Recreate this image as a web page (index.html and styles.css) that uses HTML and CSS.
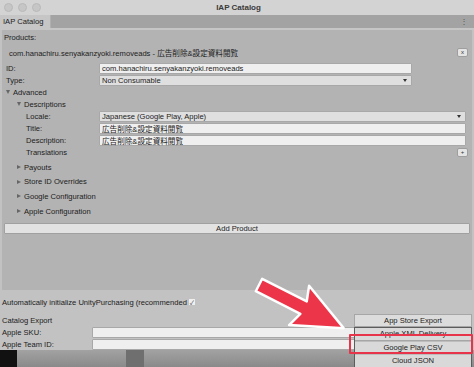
FILE: index.html
```html
<!DOCTYPE html>
<html lang="en">
<head>
    <meta charset="UTF-8">
    <meta name="viewport" content="width=device-width, initial-scale=1.0">
    <title>IAP Catalog</title>
    <link rel="stylesheet" href="styles.css">
</head>
<body>

<div class="window">
    <div class="titlebar">
        <div class="lights">
            <span class="light"></span>
            <span class="light"></span>
            <span class="light"></span>
        </div>
        <div class="title">IAP Catalog</div>
    </div>

    <div class="tabbar">
        <div class="tab">IAP Catalog</div>
        <div class="tab-menu">&#8942;</div>
    </div>

    <div class="scroll">
        <div class="row label-row">Products:</div>

        <div class="product-head">
            <span>com.hanachiru.senyakanzyoki.removeads - 広告削除&amp;設定資料閲覧</span>
            <button class="mini-btn">x</button>
        </div>

        <div class="row field-row">
            <span class="label">ID:</span>
            <div class="field short">com.hanachiru.senyakanzyoki.removeads</div>
        </div>
        <div class="row field-row">
            <span class="label">Type:</span>
            <div class="field dropdown short">Non Consumable<span class="caret"></span></div>
        </div>
        <div class="row foldout">
            <span class="tri open"></span>Advanced
        </div>
        <div class="row foldout indent1">
            <span class="tri open"></span>Descriptions
        </div>
        <div class="row field-row">
            <span class="label indent2">Locale:</span>
            <div class="field dropdown">Japanese (Google Play, Apple)<span class="caret"></span></div>
        </div>
        <div class="row field-row">
            <span class="label indent2">Title:</span>
            <div class="field">広告削除&amp;設定資料閲覧</div>
        </div>
        <div class="row field-row">
            <span class="label indent2">Description:</span>
            <div class="field">広告削除&amp;設定資料閲覧</div>
        </div>
        <div class="row translations">
            <span class="label indent2">Translations</span>
            <button class="mini-btn">+</button>
        </div>

        <div class="row foldout indent1 first-closed"><span class="tri"></span>Payouts</div>
        <div class="row foldout indent1 closed"><span class="tri"></span>Store ID Overrides</div>
        <div class="row foldout indent1 closed"><span class="tri"></span>Google Configuration</div>
        <div class="row foldout indent1 closed"><span class="tri"></span>Apple Configuration</div>

        <button class="add-btn">Add Product</button>
    </div>

    <div class="footer">
        <div class="row auto-init">Automatically initialize UnityPurchasing (recommended <span class="check">&#10003;</span></div>
        <div class="row footer-title">Catalog Export</div>
        <div class="row footer-row">
            <span class="footer-label">Apple SKU:</span>
            <div class="field"></div>
        </div>
        <div class="row footer-row">
            <span class="footer-label">Apple Team ID:</span>
            <div class="field"></div>
        </div>
    </div>
</div>

<!-- desktop behind the window -->
<div class="backdrop">
    <div class="bd-black"></div>
    <div class="bd-gray"></div>
    <div class="bd-dark"></div>
    <div class="bd-gray wide"></div>
    <div class="bd-dark thin"></div>
    <div class="bd-gray"></div>
</div>

<div class="export-menu">
    <div class="menu-btn">App Store Export</div>
    <div class="menu-list">
        <div class="menu-item">Apple XML Delivery</div>
        <div class="menu-item">Google Play CSV</div>
        <div class="menu-item">Cloud JSON</div>
    </div>
</div>
<div class="highlight"></div>

<svg class="arrow" width="474" height="367" viewBox="0 0 474 367">
    <g transform="translate(259 285) rotate(27)">
        <polygon points="0,-7 50,-7 45,-22 95,0 45,22 50,7 0,7"
                 fill="#ec3548" stroke="#fff" stroke-width="2.5" stroke-linejoin="round"/>
    </g>
</svg>

</body>
</html>
```

FILE: styles.css
```css
body {
    margin: 0;
    width: 474px;
    height: 367px;
    overflow: hidden;
    position: relative;
    font-family: "Liberation Sans", "Noto Sans CJK JP", sans-serif;
    font-size: 7.6px;
    color: #1c1c1c;
    background-color: #8c8c8c;
}
.window {
    height: 350px;
    display: flex;
    flex-direction: column;
    background-color: #c2c2c2;
}
.titlebar {
    height: 15px;
    flex: none;
    display: flex;
    align-items: center;
    background-color: #d3d3d3;
}
.lights {
    display: flex;
    gap: 5px;
    padding-left: 4px;
}
.light {
    width: 7px;
    height: 7px;
    border-radius: 50%;
    background-color: #c6c6c6;
    border: 0.5px solid #b9b9b9;
}
.title {
    flex: 1;
    text-align: center;
    font-weight: bold;
    font-size: 8px;
    color: #3a3a3a;
    margin-right: 38px;
}
.tabbar {
    height: 13px;
    flex: none;
    display: flex;
    align-items: stretch;
    background-color: #a3a3a3;
    border-bottom: 2px solid #c6c6c6;
}
.tab {
    width: 47px;
    padding-left: 3px;
    display: flex;
    align-items: center;
    background-color: #c6c6c6;
    border-right: 1px solid #b0b0b0;
}
.tab-menu {
    margin-left: auto;
    width: 14px;
    display: flex;
    align-items: center;
    color: #555;
    font-size: 8px;
}
.scroll {
    flex: none;
    height: 260px;
    margin-left: 2px;
    margin-right: 2px;
    background-color: #b3b3b3;
    display: flex;
    flex-direction: column;
}
.row {
    height: 12px;
    flex: none;
    display: flex;
    align-items: center;
}
.label-row {
    padding-left: 2px;
    margin-top: 1px;
}
.product-head {
    height: 12px;
    margin-top: 3px;
    padding-left: 7px;
    padding-right: 4px;
    display: flex;
    align-items: center;
    justify-content: space-between;
}
.mini-btn {
    width: 11px;
    height: 9px;
    padding: 0;
    border: 1px solid #9e9e9e;
    border-radius: 2px;
    background-color: #e4e4e4;
    font-family: inherit;
    font-size: 6px;
    line-height: 7px;
    color: #333;
}
.field-row {
    padding-left: 4px;
}
.product-head + .field-row {
    margin-top: 4px;
}
.label {
    width: 93px;
    flex: none;
}
.indent2 {
    padding-left: 20px;
    width: 73px;
}
.field {
    flex: 1;
    height: 9px;
    margin-right: 6px;
    padding-left: 2px;
    display: flex;
    align-items: center;
    background-color: #efefef;
    border: 0.5px solid #a8a8a8;
    border-radius: 1px;
    color: #222;
}
.field.short {
    margin-right: 60px;
}
.dropdown {
    background-color: #dfdfdf;
    justify-content: space-between;
}
.caret {
    width: 0;
    height: 0;
    margin-right: 4px;
    border-left: 2px solid transparent;
    border-right: 2px solid transparent;
    border-top: 3px solid #333;
}
.foldout {
    padding-left: 4px;
}
.indent1 {
    padding-left: 15px;
}
.tri {
    width: 0;
    height: 0;
    margin-right: 3px;
    border-top: 2.5px solid transparent;
    border-bottom: 2.5px solid transparent;
    border-left: 4px solid #666;
}
.tri.open {
    border-left: 2.5px solid transparent;
    border-right: 2.5px solid transparent;
    border-top: 4px solid #666;
    border-bottom: 0;
}
.translations {
    padding-left: 4px;
    padding-right: 4px;
    justify-content: space-between;
}
.first-closed {
    margin-top: 3px;
}
.closed {
    margin-top: 2.7px;
}
.add-btn {
    height: 11px;
    margin: 6px 2px 0 2px;
    padding: 0;
    border: 0.5px solid #a0a0a0;
    border-radius: 1px;
    background-color: #e2e2e2;
    font-family: inherit;
    font-size: 7.6px;
    color: #222;
}
.footer {
    flex: 1;
    display: flex;
    flex-direction: column;
    border-bottom: 1px solid #d0d0d0;
}
.auto-init {
    margin-top: 6px;
    padding-left: 2px;
}
.check {
    width: 6px;
    height: 6px;
    margin-left: 2px;
    display: flex;
    align-items: center;
    justify-content: center;
    background-color: #efefef;
    font-size: 6px;
    color: #333;
}
.footer-title {
    margin-top: 6px;
    padding-left: 2px;
}
.footer-row {
    padding-left: 2px;
}
.footer-label {
    width: 90px;
    flex: none;
}
.footer-row .field {
    margin-right: 4px;
}
.backdrop {
    height: 17px;
    display: flex;
}
.bd-black {
    width: 17px;
    background-color: #111;
}
.bd-gray {
    flex: 1;
    background: linear-gradient(#a2a2a2, #8a8a8a);
}
.bd-gray.wide {
    flex: 2;
}
.bd-dark {
    width: 18px;
    background-color: #6f6f6f;
}
.bd-dark.thin {
    width: 4px;
}
.export-menu {
    position: absolute;
    left: 354px;
    top: 314px;
    width: 118px;
    display: flex;
    flex-direction: column;
}
.menu-btn {
    height: 11px;
    display: flex;
    align-items: center;
    justify-content: center;
    background-color: #dcdcdc;
    border: 0.5px solid #a6a6a6;
}
.menu-list {
    display: flex;
    flex-direction: column;
    gap: 1px;
    background-color: #bdbdbd;
    border: 1px solid #5c5c5c;
}
.menu-item {
    height: 11.5px;
    display: flex;
    align-items: center;
    justify-content: center;
    background-color: #d9d9d9;
    border-bottom: 0.5px solid #a6a6a6;
}
.highlight {
    position: absolute;
    left: 349px;
    top: 334px;
    width: 120px;
    height: 16px;
    border: 2px solid #e8344a;
    border-radius: 1px;
}
.arrow {
    position: absolute;
    left: 0;
    top: 0;
}
```
